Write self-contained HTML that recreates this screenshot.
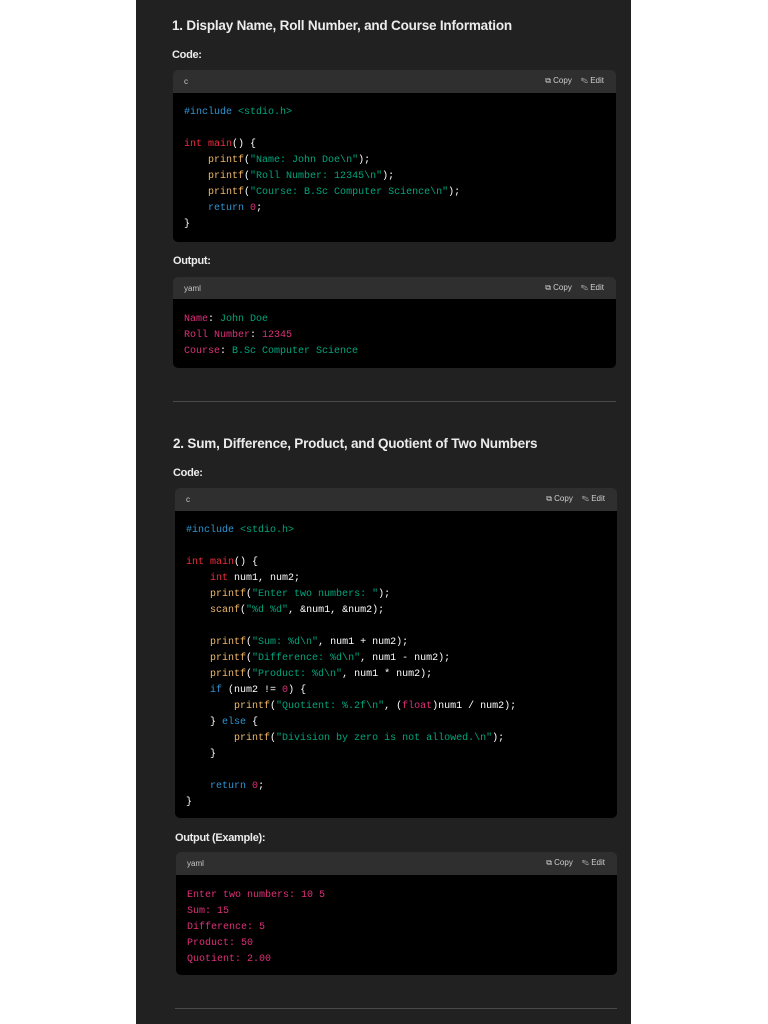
<!DOCTYPE html>
<html><head><meta charset="utf-8"><style>
*{margin:0;padding:0;box-sizing:border-box}
body{width:768px;height:1024px;background:#fff;position:relative;overflow:hidden;font-family:"Liberation Sans",sans-serif}
#p{position:absolute;left:136px;top:0;width:495px;height:1024px;background:#212121}
h2{position:absolute;color:#ececec;font-size:13.5px;font-weight:bold;letter-spacing:-0.2px;white-space:nowrap}
.lb{position:absolute;color:#ececec;font-size:11px;font-weight:bold;letter-spacing:-0.3px}
.hd{position:absolute;background:#2f2f2f;border-radius:5px 5px 0 0;color:#c8c8c8;font-size:8px}
.hd .l{position:absolute;left:11px;top:7px}
.hd .r{position:absolute;right:12px;top:6px;font-size:8px;color:#cfcfcf}
.bd{position:absolute;background:#000;border-radius:0 0 5px 5px}
pre{position:absolute;font-family:"Liberation Mono",monospace;font-size:10px;line-height:16px;color:#fff}
.k{color:#2e95d3}.t{color:#f22c3d}.b{color:#f0b86b}.s{color:#00a67d}.n{color:#df3079}
.hr{position:absolute;height:1px;background:#4a4a4a}
</style></head><body>
<div id="p"></div>
<h2 style="left:172px;top:18px">1. Display Name, Roll Number, and Course Information</h2>
<div class="lb" style="left:172px;top:49px">Code:</div>
<div class="hd" style="left:173px;top:70px;width:443px;height:23px"><span class="l">c</span><span class="r">⧉ Copy &nbsp;&nbsp; ✎ Edit</span></div>
<div class="bd" style="left:173px;top:93px;width:443px;height:149px"></div>
<pre style="left:184px;top:105px"><span class="k">#include</span> <span class="s">&lt;stdio.h&gt;</span>

<span class="t">int</span> <span class="t">main</span>() {
    <span class="b">printf</span>(<span class="s">"Name: John Doe\n"</span>);
    <span class="b">printf</span>(<span class="s">"Roll Number: 12345\n"</span>);
    <span class="b">printf</span>(<span class="s">"Course: B.Sc Computer Science\n"</span>);
    <span class="k">return</span> <span class="n">0</span>;
}</pre>
<div class="lb" style="left:173px;top:255px">Output:</div>
<div class="hd" style="left:173px;top:277px;width:443px;height:22px"><span class="l">yaml</span><span class="r">⧉ Copy &nbsp;&nbsp; ✎ Edit</span></div>
<div class="bd" style="left:173px;top:299px;width:443px;height:69px"></div>
<pre style="left:184px;top:312px"><span class="n">Name</span>: <span class="s">John Doe</span>
<span class="n">Roll Number</span>: <span class="n">12345</span>
<span class="n">Course</span>: <span class="s">B.Sc Computer Science</span></pre>
<div class="hr" style="left:173px;top:401px;width:443px"></div>
<h2 style="left:173px;top:436px">2. Sum, Difference, Product, and Quotient of Two Numbers</h2>
<div class="lb" style="left:173px;top:467px">Code:</div>
<div class="hd" style="left:175px;top:488px;width:442px;height:23px"><span class="l">c</span><span class="r">⧉ Copy &nbsp;&nbsp; ✎ Edit</span></div>
<div class="bd" style="left:175px;top:511px;width:442px;height:307px"></div>
<pre style="left:186px;top:523px"><span class="k">#include</span> <span class="s">&lt;stdio.h&gt;</span>

<span class="t">int</span> <span class="t">main</span>() {
    <span class="t">int</span> num1, num2;
    <span class="b">printf</span>(<span class="s">"Enter two numbers: "</span>);
    <span class="b">scanf</span>(<span class="s">"%d %d"</span>, &amp;num1, &amp;num2);

    <span class="b">printf</span>(<span class="s">"Sum: %d\n"</span>, num1 + num2);
    <span class="b">printf</span>(<span class="s">"Difference: %d\n"</span>, num1 - num2);
    <span class="b">printf</span>(<span class="s">"Product: %d\n"</span>, num1 * num2);
    <span class="k">if</span> (num2 != <span class="n">0</span>) {
        <span class="b">printf</span>(<span class="s">"Quotient: %.2f\n"</span>, (<span class="n">float</span>)num1 / num2);
    } <span class="k">else</span> {
        <span class="b">printf</span>(<span class="s">"Division by zero is not allowed.\n"</span>);
    }

    <span class="k">return</span> <span class="n">0</span>;
}</pre>
<div class="lb" style="left:175px;top:832px">Output (Example):</div>
<div class="hd" style="left:176px;top:852px;width:441px;height:23px"><span class="l">yaml</span><span class="r">⧉ Copy &nbsp;&nbsp; ✎ Edit</span></div>
<div class="bd" style="left:176px;top:875px;width:441px;height:100px"></div>
<pre style="left:187px;top:888px;color:#df3079">Enter two numbers: 10 5
Sum: 15
Difference: 5
Product: 50
Quotient: 2.00</pre>
<div class="hr" style="left:175px;top:1008px;width:442px"></div>
</body></html>
